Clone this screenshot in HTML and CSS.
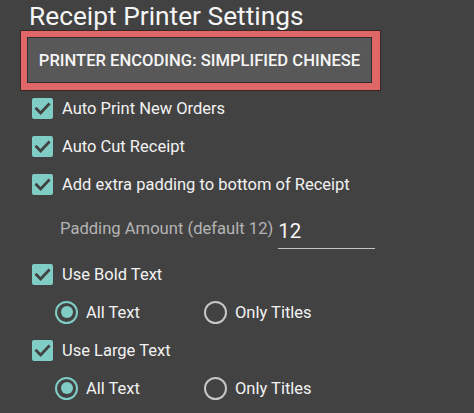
FILE: index.html
```html
<!DOCTYPE html>
<html>
<head>
<meta charset="utf-8">
<link rel="stylesheet" href="styles.css">
</head>
<body>
<div class="page">
  <h1 class="title">Receipt Printer Settings</h1>
  <div class="highlight">
    <div class="btn">PRINTER ENCODING: SIMPLIFIED CHINESE</div>
  </div>
  <div class="list">
    <div class="row first">
      <span class="check"><svg viewBox="0 0 21 21" width="21" height="21"><path d="M4.5 10.8 L8.6 14.9 L16.6 6.6" fill="none" stroke="#424242" stroke-width="2.8" stroke-linecap="square"/></svg></span>
      <span class="label">Auto Print New Orders</span>
    </div>
    <div class="row">
      <span class="check"><svg viewBox="0 0 21 21" width="21" height="21"><path d="M4.5 10.8 L8.6 14.9 L16.6 6.6" fill="none" stroke="#424242" stroke-width="2.8" stroke-linecap="square"/></svg></span>
      <span class="label">Auto Cut Receipt</span>
    </div>
    <div class="row">
      <span class="check"><svg viewBox="0 0 21 21" width="21" height="21"><path d="M4.5 10.8 L8.6 14.9 L16.6 6.6" fill="none" stroke="#424242" stroke-width="2.8" stroke-linecap="square"/></svg></span>
      <span class="label">Add extra padding to bottom of Receipt</span>
    </div>
    <div class="pad-row">
      <span class="pad-label">Padding Amount (default 12)</span>
      <span class="pad-input">12</span>
    </div>
    <div class="row">
      <span class="check"><svg viewBox="0 0 21 21" width="21" height="21"><path d="M4.5 10.8 L8.6 14.9 L16.6 6.6" fill="none" stroke="#424242" stroke-width="2.8" stroke-linecap="square"/></svg></span>
      <span class="label">Use Bold Text</span>
    </div>
    <div class="row radios">
      <span class="radio on"></span><span class="rlabel">All Text</span>
      <span class="radio"></span><span class="rlabel">Only Titles</span>
    </div>
    <div class="row">
      <span class="check"><svg viewBox="0 0 21 21" width="21" height="21"><path d="M4.5 10.8 L8.6 14.9 L16.6 6.6" fill="none" stroke="#424242" stroke-width="2.8" stroke-linecap="square"/></svg></span>
      <span class="label">Use Large Text</span>
    </div>
    <div class="row radios">
      <span class="radio on"></span><span class="rlabel">All Text</span>
      <span class="radio"></span><span class="rlabel">Only Titles</span>
    </div>
  </div>
</div>
</body>
</html>
```
FILE: styles.css
```css
html, body {
  margin: 0;
  padding: 0;
  background: #424242;
  height: 100%;
  overflow: hidden;
}
.page {
  font-family: Roboto, "Liberation Sans", sans-serif;
  color: #f2f2f2;
  padding-left: 21px;
}
.title {
  margin: 0;
  padding: 1px 0 0 8px;
  font-size: 26.3px;
  font-weight: 400;
  line-height: 30px;
  color: #f5f5f5;
}
.highlight {
  width: 345px;
  height: 46px;
  border-style: solid;
  border-color: #e06767;
  border-width: 6px 8px 7px 6px;
  box-shadow: 0 0 0 1px #3b2626;
}
.btn {
  box-sizing: border-box;
  height: 46px;
  background: #585858;
  border: 1px solid #2e2e2e;
  display: flex;
  align-items: center;
  justify-content: center;
  font-size: 16.6px;
  font-weight: 500;
  color: #f5f5f5;
}
.list {
  display: flex;
  flex-direction: column;
}
.row {
  height: 38px;
  display: flex;
  align-items: center;
  padding-left: 11px;
}
.row.first {
  height: 37px;
}
.check {
  width: 21px;
  height: 21px;
  border-radius: 2px;
  background: #7fcdc4;
  display: block;
}
.check svg {
  display: block;
}
.label {
  margin-left: 9px;
  font-size: 16.5px;
  color: #f2f2f2;
}
.pad-row {
  height: 52px;
  display: flex;
  align-items: flex-end;
  padding-left: 39px;
}
.pad-label {
  font-size: 16.6px;
  color: #b4b4b4;
  line-height: 20px;
  margin-bottom: 16px;
}
.pad-input {
  margin-left: 5px;
  width: 97px;
  font-size: 20.5px;
  line-height: 24px;
  color: #f5f5f5;
  border-bottom: 1.5px solid #c4c4c4;
  padding-bottom: 5px;
  margin-bottom: 6px;
}
.radios {
  padding-left: 34px;
}
.radio {
  box-sizing: border-box;
  width: 23px;
  height: 23px;
  border-radius: 50%;
  border: 2.5px solid #c6c6c6;
  display: flex;
  align-items: center;
  justify-content: center;
}
.radio.on {
  border-color: #7fcdc4;
}
.radio.on::after {
  content: "";
  width: 12px;
  height: 12px;
  border-radius: 50%;
  background: #7fcdc4;
}
.rlabel {
  font-size: 16.5px;
  color: #f2f2f2;
  margin-left: 8px;
  width: 118px;
}
```
